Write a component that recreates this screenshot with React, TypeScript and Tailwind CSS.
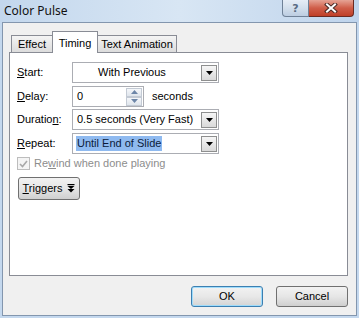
const ui = "font-['Liberation_Sans',Arial,sans-serif] text-[11px] text-black";

function U({ children }: { children: string }) {
  return <span className="underline underline-offset-[1px]">{children}</span>;
}

function DropArrow() {
  return (
    <div className="w-[16px] h-[16px] border border-[#8e8f8f] bg-linear-to-b from-[#f6f6f6] to-[#d9d9d9] flex items-center justify-center">
      <svg width="7" height="4" viewBox="0 0 7 4">
        <path d="M0 0H7L3.5 4Z" fill="#000" />
      </svg>
    </div>
  );
}

function Combo({ children, pad = "pl-[4px]" }: { children: React.ReactNode; pad?: string }) {
  return (
    <div className={`w-[147px] h-[21px] border border-[#abadb3] bg-white flex items-center justify-between pr-[1px] ${pad}`}>
      <div className="flex-1 leading-none">{children}</div>
      <DropArrow />
    </div>
  );
}

function SpinHalf({ up }: { up?: boolean }) {
  return (
    <div className="h-[9px] w-[16px] border border-[#c3cad4] bg-linear-to-b from-[#f5f7fa] to-[#dfe5ec] flex items-center justify-center">
      <svg width="7" height="4" viewBox="0 0 7 4">
        <path d={up ? "M0 4H7L3.5 0Z" : "M0 0H7L3.5 4Z"} fill="#6d86a8" />
      </svg>
    </div>
  );
}

function Label({ children }: { children: React.ReactNode }) {
  return <div className="w-[55px] shrink-0">{children}</div>;
}

export default function App() {
  return (
    <div className={`w-[359px] h-[318px] flex flex-col bg-[#c4d8ee] ${ui}`}>
      {/* title bar */}
      <div className="h-[22px] flex items-start justify-between pl-[4px] pr-[5px] bg-linear-to-r from-[#c3d7ed] via-[#d8e6f4] to-[#bfd4ec]">
        <div className="h-[22px] flex items-center font-['Noto_Sans',sans-serif] text-[12px] text-[#111]">
          Color Pulse
        </div>
        <div className="flex">
          <div className="w-[27px] h-[17px] rounded-bl-[4px] border border-t-0 border-[#6f8197] bg-linear-to-b from-[#e6edf6] via-[#d3dfec] to-[#bccde2] flex items-center justify-center">
            <span className="font-['DejaVu_Sans',sans-serif] text-[11px] font-bold leading-none text-[#5a6c84]">?</span>
          </div>
          <div className="w-[45px] h-[17px] rounded-br-[4px] border border-t-0 border-l-0 border-[#6b2a22] bg-linear-to-b from-[#e5a395] via-[#cf5d49] to-[#bf3f28] flex items-center justify-center">
            <svg width="14" height="10" viewBox="0 0 14 10">
              <path d="M3 1.5L11 8.5M11 1.5L3 8.5" stroke="#4a2a26" strokeWidth="4" strokeLinecap="square" />
              <path d="M3 1.5L11 8.5M11 1.5L3 8.5" stroke="#ffffff" strokeWidth="2" strokeLinecap="square" />
            </svg>
          </div>
        </div>
      </div>

      {/* client area */}
      <div className="flex-1 mx-[2px] mb-[2px] border border-[#8396ae] bg-[#f0f0f0] flex flex-col pl-[6px] pt-[8px]">
        {/* tabs */}
        <div className="flex items-end h-[21px] pl-[2px] relative z-10 whitespace-nowrap">
          <div className="w-[42px] h-[17px] border border-b-0 border-[#898c95] bg-linear-to-b from-[#f4f4f4] to-[#dcdcdc] flex items-center justify-center pt-[1px]">
            Effect
          </div>
          <div className="w-[46px] h-[22px] -ml-[1px] -mb-[1px] border border-b-0 border-[#898c95] bg-white flex items-start justify-center pt-[3px]">
            Timing
          </div>
          <div className="w-[80px] h-[17px] -ml-[1px] border border-b-0 border-[#898c95] bg-linear-to-b from-[#f4f4f4] to-[#dcdcdc] flex items-center justify-center pt-[1px]">
            Text Animation
          </div>
        </div>

        {/* panel */}
        <div className="w-[339px] h-[224px] border border-[#898c95] bg-white flex flex-col pl-[7px] pt-[9px]">
          <div className="flex items-center h-[21px]">
            <Label>
              <U>S</U>tart:
            </Label>
            <Combo pad="pl-[25px]">With Previous</Combo>
          </div>

          <div className="flex items-center h-[21px] mt-[3px]">
            <Label>
              <U>D</U>elay:
            </Label>
            <div className="w-[72px] h-[21px] border border-[#abadb3] bg-white flex items-center justify-between pl-[4px] pr-[1px]">
              <span>0</span>
              <div className="flex flex-col">
                <SpinHalf up />
                <SpinHalf />
              </div>
            </div>
            <span className="ml-[8px]">seconds</span>
          </div>

          <div className="flex items-center h-[21px] mt-[2px]">
            <Label>
              Duratio<U>n</U>:
            </Label>
            <Combo>0.5 seconds (Very Fast)</Combo>
          </div>

          <div className="flex items-center h-[21px] mt-[3px]">
            <Label>
              <U>R</U>epeat:
            </Label>
            <Combo pad="pl-[3px]">
              <span className="inline-block bg-[#8fbaf0] px-[1px] py-[2px] text-[#0b1a3a]">Until End of Slide</span>
            </Combo>
          </div>

          <div className="flex items-center h-[13px] mt-[3px] text-[#8d8d8d]">
            <div className="w-[13px] h-[13px] border border-[#bdbdbd] bg-[#f4f4f4] flex items-center justify-center">
              <svg width="9" height="8" viewBox="0 0 9 8">
                <path d="M1 4L3.5 6.5L8 1" stroke="#a8a8a8" strokeWidth="1.6" fill="none" />
              </svg>
            </div>
            <span className="ml-[4px]">
              Re<U>w</U>ind when done playing
            </span>
          </div>

          <div className="mt-[7px] ml-[1px] w-[62px] h-[23px] rounded-[3px] border border-[#707070] bg-linear-to-b from-[#f2f2f2] via-[#e6e6e6] to-[#cfcfcf] flex items-center justify-center gap-[5px]">
            <span>
              <U>T</U>riggers
            </span>
            <svg width="8" height="9" viewBox="0 0 8 9">
              <rect x="0.5" y="0" width="7" height="1.2" fill="#000" />
              <path d="M0.5 2H7.5L4 5Z" fill="#000" />
              <path d="M0.5 5H7.5L4 8.5Z" fill="#000" />
            </svg>
          </div>
        </div>

        {/* buttons */}
        <div className="w-[339px] flex justify-end gap-[13px] mt-[10px]">
          <div className="w-[72px] h-[21px] rounded-[3px] border border-[#3c7fb1] bg-linear-to-b from-[#f2f2f2] via-[#e8e8e8] to-[#d4d4d4] shadow-[inset_0_0_0_1px_#9fdcfb] flex items-center justify-center">
            OK
          </div>
          <div className="w-[72px] h-[21px] rounded-[3px] border border-[#707070] bg-linear-to-b from-[#f2f2f2] via-[#e6e6e6] to-[#cfcfcf] flex items-center justify-center">
            Cancel
          </div>
        </div>
      </div>
    </div>
  );
}
